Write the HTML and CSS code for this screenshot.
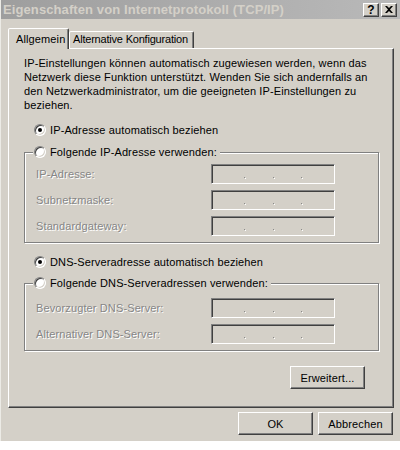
FILE: index.html
```html
<!DOCTYPE html>
<html lang="de">
<head>
<meta charset="utf-8">
<title>Eigenschaften von Internetprotokoll (TCP/IP)</title>
<link rel="stylesheet" href="styles.css">
</head>
<body>
<div class="window">
  <div class="titlebar">
    <span class="title">Eigenschaften von Internetprotokoll (TCP/IP)</span>
    <div class="tbtns">
      <span class="tbtn help">?</span>
      <span class="tbtn close">
        <svg width="8" height="7" viewBox="0 0 8 7"><path d="M0 0h2l2 2 2-2h2L5 3.5 8 7H6L4 5 2 7H0l3-3.5z" fill="#000"/></svg>
      </span>
    </div>
  </div>
  <div class="client">
    <div class="tabs">
      <div class="tab active">Allgemein</div>
      <div class="tab alt">Alternative Konfiguration</div>
    </div>
    <div class="panel">
      <p class="intro">IP-Einstellungen können automatisch zugewiesen werden, wenn das<br>Netzwerk diese Funktion unterstützt. Wenden Sie sich andernfalls an<br>den Netzwerkadministrator, um die geeigneten IP-Einstellungen zu<br>beziehen.</p>

      <div class="option first"><span class="radio checked"></span><span>IP-Adresse automatisch beziehen</span></div>
      <fieldset class="group ip">
        <legend><span class="radio"></span><span>Folgende IP-Adresse verwenden:</span></legend>
        <div class="row"><span class="label">IP-Adresse:</span><span class="field"><i></i><i></i><i></i></span></div>
        <div class="row"><span class="label">Subnetzmaske:</span><span class="field"><i></i><i></i><i></i></span></div>
        <div class="row"><span class="label">Standardgateway:</span><span class="field"><i></i><i></i><i></i></span></div>
      </fieldset>

      <div class="option second"><span class="radio checked"></span><span>DNS-Serveradresse automatisch beziehen</span></div>
      <fieldset class="group dns">
        <legend><span class="radio"></span><span>Folgende DNS-Serveradressen verwenden:</span></legend>
        <div class="row"><span class="label">Bevorzugter DNS-Server:</span><span class="field"><i></i><i></i><i></i></span></div>
        <div class="row"><span class="label">Alternativer DNS-Server:</span><span class="field"><i></i><i></i><i></i></span></div>
      </fieldset>

      <div class="adv"><button class="btn">Erweitert...</button></div>
    </div>
    <div class="footer">
      <button class="btn">OK</button>
      <button class="btn">Abbrechen</button>
    </div>
  </div>
</div>
</body>
</html>
```

FILE: styles.css
```css
* { box-sizing: border-box; }
html, body { margin: 0; padding: 0; background: #fff; }
body {
  font-family: "Liberation Sans", Arial, sans-serif;
  font-size: 11px;
  letter-spacing: 0.12px;
  color: #000;
}
.window {
  width: 400px;
  height: 441px;
  background: #d4d0c8;
  border-left: 1px solid #ecebe6;
}
.titlebar {
  height: 19px;
  display: flex;
  align-items: center;
  justify-content: space-between;
  padding: 0 3px 0 2px;
  background: linear-gradient(90deg, #9e9e9e, #b9b9b9);
}
.title {
  font-weight: bold;
  color: #d4d0c8;
  font-size: 13px;
  letter-spacing: 0.1px;
}
.tbtns { display: flex; gap: 2px; }
.tbtn {
  width: 16px;
  height: 14px;
  display: flex;
  align-items: center;
  justify-content: center;
  background: #d4d0c8;
  border: 1px solid;
  border-color: #fff #404040 #404040 #fff;
  box-shadow: inset -1px -1px #808080;
  font-weight: bold;
  font-size: 12px;
  line-height: 1;
}
.client { padding: 9px 0 0 7px; }
.tabs {
  display: flex;
  align-items: flex-end;
  height: 20px;
}
.tab {
  height: 17px;
  line-height: 15px;
  padding: 0 2px 0 3px;
  border: 1px solid;
  border-bottom: 0;
  border-color: #fff #404040 transparent #fff;
  box-shadow: inset -1px 0 #808080;
  border-radius: 2px 2px 0 0;
  background: #d4d0c8;
  white-space: nowrap;
  overflow: hidden;
}
.tab.alt {
  width: 125px;
  letter-spacing: -0.2px;
}
.tab.active {
  position: relative;
  z-index: 1;
  height: 21px;
  margin-bottom: -1px;
  padding: 2px 6px 0 7px;
  line-height: 16px;
  width: 61px;
}
.panel {
  width: 386px;
  height: 360px;
  border: 1px solid;
  border-color: #fff #404040 #404040 #fff;
  box-shadow: inset -1px -1px #808080;
  padding: 7px 0 0 15px;
}
.intro {
  margin: 0;
  line-height: 14px;
}
.option {
  display: flex;
  align-items: center;
  gap: 4px;
  height: 16px;
  margin-left: 10px;
}
.option.first { margin-top: 10px; }
.option.second { margin-top: 11px; }
.radio {
  width: 12px;
  height: 12px;
  flex: none;
  border-radius: 50%;
  border: 1px solid;
  border-color: #808080 #fff #fff #808080;
  background: #fff;
  box-shadow: inset 1px 1px #404040, inset -1px -1px #d4d0c8;
  display: flex;
  align-items: center;
  justify-content: center;
}
.radio.checked::after {
  content: "";
  width: 4px;
  height: 4px;
  border-radius: 50%;
  background: #000;
}
.group {
  width: 355px;
  margin: 6px 0 0 0;
  padding: 4px 43px 6px 11px;
  border: 1px solid #808080;
  box-shadow: inset 1px 1px #fff, 1px 1px #fff;
  display: flex;
  flex-direction: column;
  gap: 6px;
}
.group.dns { margin-top: 5px; padding-top: 7px; }
.group legend {
  display: flex;
  align-items: center;
  gap: 4px;
  height: 16px;
  margin-left: -3px;
  padding: 0 3px 0 1px;
  background: #d4d0c8;
}
.row {
  display: flex;
  align-items: center;
  height: 20px;
}
.label {
  flex: 1;
  color: #868686;
  text-shadow: 1px 1px #fff;
}
.field {
  width: 124px;
  height: 20px;
  border: 1px solid;
  border-color: #808080 #fff #fff #808080;
  box-shadow: inset 1px 1px #404040, inset -1px -1px #d4d0c8;
  background: #d4d0c8;
  display: flex;
  align-items: flex-end;
  padding: 0 0 5px 32px;
  gap: 28px;
}
.field i {
  width: 1px;
  height: 1px;
  background: #8a8a8a;
  box-shadow: 1px 1px #fff;
}
.field i + i + i { margin-left: -1px; }
.adv {
  display: flex;
  justify-content: flex-end;
  padding-right: 28px;
  margin-top: 15px;
}
.btn {
  width: 75px;
  height: 23px;
  padding: 0;
  font: inherit;
  letter-spacing: inherit;
  color: #000;
  background: #d4d0c8;
  border: 1px solid;
  border-color: #fff #404040 #404040 #fff;
  box-shadow: inset -1px -1px #808080;
  border-radius: 0;
}
.footer {
  display: flex;
  justify-content: flex-end;
  gap: 5px;
  padding-right: 7px;
  margin-top: 4px;
}
```
